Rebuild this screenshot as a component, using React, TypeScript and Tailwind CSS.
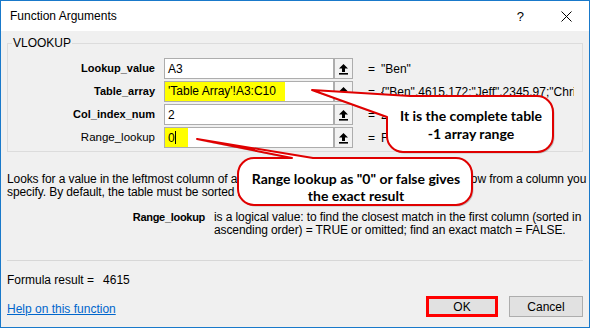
import React from "react";

const UploadBtn = () => (
  <div className="w-[19px] h-[21px] border border-[#adadad] bg-[#f2f2f2] flex items-center justify-center">
    <svg width="11" height="12" viewBox="0 0 11 12">
      <path d="M5.5 1 L10 5.5 L7 5.5 L7 9 L4 9 L4 5.5 L1 5.5 Z" fill="#000" />
      <rect x="1" y="10" width="9" height="1.6" fill="#000" />
    </svg>
  </div>
);

type Row = { label: string; bold: boolean; value: React.ReactNode; result: string };

export default function App() {
  const rows: Row[] = [
    { label: "Lookup_value", bold: true, value: <span>A3</span>, result: '"Ben"' },
    {
      label: "Table_array",
      bold: true,
      value: <span className="bg-[#ffff00] inline-block h-[19px] leading-[19px] pr-[9px] pl-[3px] -ml-[3px]">'Table Array'!A3:C10</span>,
      result: '{"Ben",4615,172;"Jeff",2345,97;"Chris",;"Mark",3456,120}',
    },
    { label: "Col_index_num", bold: true, value: <span>2</span>, result: "2" },
    {
      label: "Range_lookup",
      bold: false,
      value: (
        <span className="bg-[#ffff00] inline-flex items-center h-[19px] pl-[3px] -ml-[3px] w-[23px]">
          0<span className="inline-block w-px h-[13px] bg-black" />
        </span>
      ),
      result: "FALSE",
    },
  ];

  return (
    <div
      className="relative w-[590px] h-[328px] border border-[#1979ca] bg-[#f0f0f0] flex flex-col text-black overflow-hidden"
      style={{ fontFamily: '"Liberation Sans", Arial, sans-serif' }}
    >
      {/* Title bar */}
      <div className="h-[30px] bg-white flex items-center pl-[9px] pr-[17px] shrink-0">
        <span className="text-[12px] leading-none">Function Arguments</span>
        <span className="ml-auto text-[13px] leading-none mr-[37px]">?</span>
        <svg width="11" height="11" viewBox="0 0 11 11">
          <path d="M0.5 0.5 L10.5 10.5 M10.5 0.5 L0.5 10.5" stroke="#000" strokeWidth="1" />
        </svg>
      </div>

      {/* Group box */}
      <fieldset className="mx-[6px] mt-[5px] h-[116px] border border-[#dcdcdc] px-0 pb-0 pt-[8px] shrink-0">
        <legend className="ml-[4px] px-[1px] text-[12px] leading-[14px]">VLOOKUP</legend>
        <div className="flex flex-col gap-[2px]">
          {rows.map((r) => (
            <div key={r.label} className="flex items-center h-[21px]">
              <div
                className={`w-[147px] text-right ${r.bold ? "font-bold text-[11px]" : "text-[11.5px]"}`}
              >
                {r.label}
              </div>
              <div className="ml-[9px] w-[170px] h-[21px] border border-[#adadad] bg-white pl-[3px] text-[12px] flex items-center overflow-hidden">
                {r.value}
              </div>
              <UploadBtn />
              <div className="ml-[15px] text-[12px] w-[13px]">=</div>
              <div className="text-[12px] whitespace-nowrap overflow-hidden w-[193px]">{r.result}</div>
            </div>
          ))}
        </div>
      </fieldset>

      {/* Description */}
      <div className="mx-[6px] mt-[21px] text-[12px] leading-[13px] tracking-[-0.1px] whitespace-nowrap">
        Looks for a value in the leftmost column of a table, and then returns a value in the same row from a column you
        <br />
        specify. By default, the table must be sorted in an ascending order.
      </div>

      <div className="mt-[12px] flex text-[12px] leading-[13px]">
        <div className="w-[204px] text-right font-bold text-[11px] tracking-[-0.3px]">Range_lookup</div>
        <div className="ml-[9px] whitespace-nowrap tracking-[-0.1px]">
          is a logical value: to find the closest match in the first column (sorted in
          <br />
          ascending order) = TRUE or omitted; find an exact match = FALSE.
        </div>
      </div>

      <div className="mx-[6px] mt-[23px] h-px bg-[#d7d7d7] shrink-0" />

      <div className="flex items-end mx-[6px] mt-[12px]">
        <div className="flex flex-col text-[12px] leading-[14px]">
          <div className="flex">
            <span>Formula result =</span>
            <span className="ml-[9px]">4615</span>
          </div>
          <a className="mt-[15px] text-[#0066cc] underline" href="#">
            Help on this function
          </a>
        </div>
        <div className="ml-auto flex gap-[11px] mb-[-1px]">
          <button className="w-[72px] h-[21px] border-[3px] border-[#ff0000] bg-[#e1e1e1] text-[12px] leading-none">
            OK
          </button>
          <button className="w-[74px] h-[21px] border border-[#adadad] bg-[#e1e1e1] text-[12px] leading-none">
            Cancel
          </button>
        </div>
      </div>

      {/* Callout shapes overlay */}
      <svg className="absolute left-[-1px] top-[-1px] pointer-events-none" width="590" height="328" viewBox="0 0 590 328">
        <g transform="translate(1.5,1.5)" opacity="0.3">
          <path
            d="M410 96 L537 96 A16 16 0 0 1 553 112 L553 136 A16 16 0 0 1 537 152 L403 152 A16 16 0 0 1 387 136 L387 117 L312 90 Z"
            fill="#555"
          />
          <path
            d="M313 158 L456 158 A16 16 0 0 1 472 174 L472 189 A16 16 0 0 1 456 205 L254 205 A16 16 0 0 1 238 189 L238 174 A16 16 0 0 1 254 158 L292 158 L197 139 Z"
            fill="#555"
          />
        </g>
        <path
          d="M410 96 L537 96 A16 16 0 0 1 553 112 L553 136 A16 16 0 0 1 537 152 L403 152 A16 16 0 0 1 387 136 L387 117 L312 90 Z"
          fill="#fff"
          stroke="#e00000"
          strokeWidth="2"
          strokeLinejoin="round"
        />
        <path
          d="M313 158 L456 158 A16 16 0 0 1 472 174 L472 189 A16 16 0 0 1 456 205 L254 205 A16 16 0 0 1 238 189 L238 174 A16 16 0 0 1 254 158 L292 158 L197 139 Z"
          fill="#fff"
          stroke="#e00000"
          strokeWidth="2"
          strokeLinejoin="round"
        />
      </svg>

      {/* Callout texts */}
      <div
        className="absolute left-[386px] top-[106px] w-[168px] text-center font-bold text-[14px] leading-[18px] text-black"
        style={{ fontFamily: "Lato, sans-serif" }}
      >
        It is the complete table
        <br />
        -1 array range
      </div>
      <div
        className="absolute left-[237px] top-[169px] w-[236px] text-center font-bold text-[14px] leading-[17px] text-black"
        style={{ fontFamily: "Lato, sans-serif" }}
      >
        Range lookup as "0" or false gives
        <br />
        the exact result
      </div>
    </div>
  );
}
